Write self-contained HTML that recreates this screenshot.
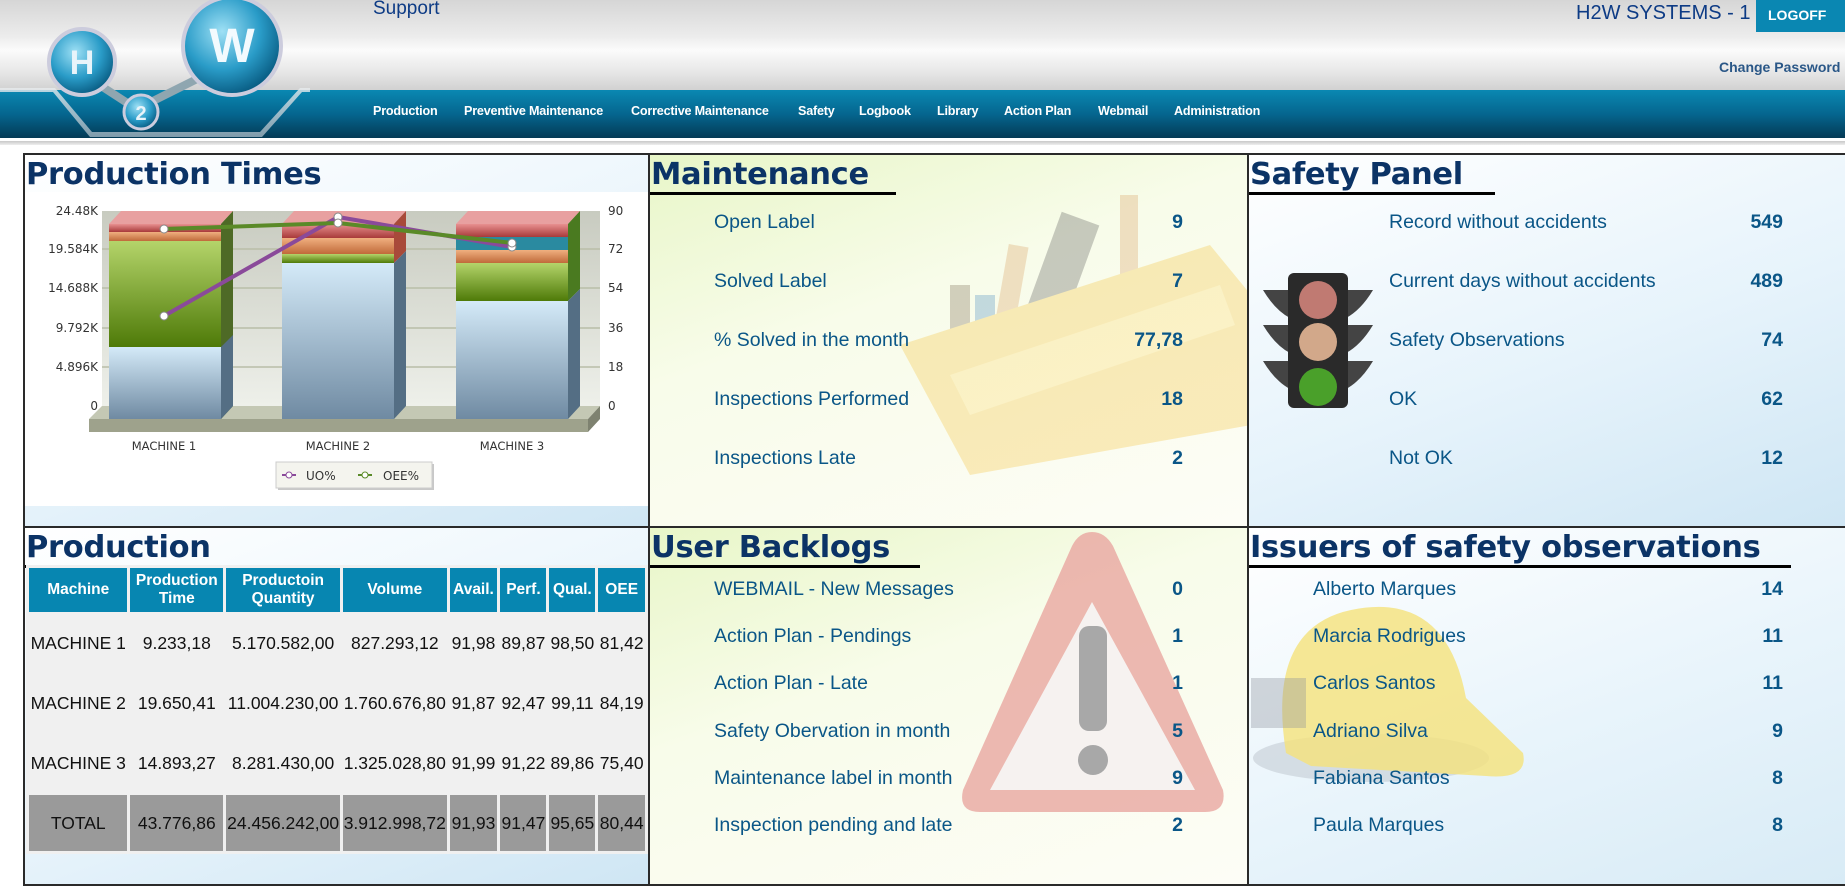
<!DOCTYPE html>
<html><head><meta charset="utf-8">
<style>
*{margin:0;padding:0;box-sizing:border-box}
body{width:1845px;height:881px;overflow:hidden;background:#fff;font-family:"Liberation Sans",Arial,sans-serif;position:relative}
.abs{position:absolute}
#top{left:0;top:0;width:1845px;height:91px;background:linear-gradient(#d6d6d6 0%,#ececec 40%,#fbfbfb 55%,#e6e6e6 80%,#d0d0d0 100%)}
#nav{left:0;top:90px;width:1845px;height:48px;background:linear-gradient(#0a88b2 0%,#05668f 50%,#043a55 100%)}
#nav span{position:absolute;top:14px;color:#fff;font-weight:bold;font-size:12.6px;letter-spacing:-0.2px}
.panel{position:absolute;border:2px solid #2a2a2a;overflow:hidden}
.title{position:absolute;left:0;top:3px;font-family:"DejaVu Sans",Verdana,sans-serif;font-weight:bold;font-size:30.5px;color:#0b3366;letter-spacing:-0.3px;border-bottom:3px solid #000;line-height:34px;white-space:nowrap;padding-left:1px}
.row{position:absolute;font-size:19.5px;color:#0a5687;white-space:nowrap}
.val{position:absolute;font-size:19.5px;color:#0a5687;font-weight:bold;text-align:right;width:120px}
table{border-collapse:separate;border-spacing:3px;background:#f0f0f0}
th{background:#0786b1;color:#fff;font-size:15.5px;font-weight:bold;line-height:18px;padding:0;text-align:center}
td{font-size:17.5px;color:#111;text-align:center;padding:0;white-space:nowrap}
tr.tot td{background:#9a9a9a}
</style></head><body>
<div id="top" class="abs"></div>
<div id="nav" class="abs">
<span style="left:373px">Production</span>
<span style="left:464px">Preventive Maintenance</span>
<span style="left:631px">Corrective Maintenance</span>
<span style="left:798px">Safety</span>
<span style="left:859px">Logbook</span>
<span style="left:937px">Library</span>
<span style="left:1004px">Action Plan</span>
<span style="left:1098px">Webmail</span>
<span style="left:1174px">Administration</span>
</div>
<div class="abs" style="left:0;top:138px;width:1845px;height:3px;background:#fff"></div>
<div class="abs" style="left:0;top:141px;width:1845px;height:4px;background:linear-gradient(#c8c8c8,#eee)"></div>
<!-- logo -->
<svg class="abs" style="left:0;top:0" width="310" height="140" viewBox="0 0 310 140">
<defs>
<radialGradient id="lg" cx="40%" cy="35%" r="65%"><stop offset="0" stop-color="#9ee0f5"/><stop offset="0.6" stop-color="#2a9cc8"/><stop offset="1" stop-color="#0a5f86"/></radialGradient>
<linearGradient id="sw" x1="0" x2="0" y1="0" y2="1"><stop offset="0" stop-color="#e8ecee"/><stop offset="1" stop-color="#9fb4c0"/></linearGradient>
</defs>
<path d="M0 88 L55 88 L92 132 L260 132 L300 88 L310 88 L310 92 L302 92 L262 137 L90 137 L53 92 L0 92Z" fill="url(#sw)" opacity="0.8"/>
<line x1="95" y1="82" x2="135" y2="108" stroke="#8fa6b0" stroke-width="8"/>
<line x1="145" y1="105" x2="205" y2="75" stroke="#8fa6b0" stroke-width="8"/>
<circle cx="82" cy="62" r="33" fill="url(#lg)" stroke="#ccd" stroke-width="4"/>
<circle cx="232" cy="46" r="49" fill="url(#lg)" stroke="#ccd" stroke-width="4"/>
<circle cx="141" cy="112" r="17" fill="url(#lg)" stroke="#ccd" stroke-width="3"/>
<text x="82" y="74" font-family="Liberation Sans" font-weight="bold" font-size="34" fill="#e8f4fa" text-anchor="middle">H</text>
<text x="232" y="62" font-family="Liberation Sans" font-weight="bold" font-size="48" fill="#f2fafe" text-anchor="middle">W</text>
<text x="141" y="120" font-family="Liberation Sans" font-weight="bold" font-size="20" fill="#e8f4fa" text-anchor="middle">2</text>
</svg>
<div class="abs" style="left:373px;top:-2px;font-size:19px;color:#0d3b85">Support</div>
<div class="abs" style="left:1576px;top:2px;font-size:20px;color:#0d3b85">H2W SYSTEMS - 1</div>
<div class="abs" style="left:1756px;top:0;width:89px;height:32px;background:#0a87b2;color:#fff;font-weight:bold;font-size:14px;line-height:30px;padding-left:12px">LOGOFF</div>
<div class="abs" style="left:1719px;top:59px;font-size:14px;font-weight:bold;color:#2a5787;white-space:nowrap">Change Password</div>

<!-- Panel 1 -->
<div class="panel" style="left:23px;top:153px;width:627px;height:375px;background:linear-gradient(160deg,#fff 0%,#eaf5fc 50%,#cfe6f4 100%)">
<div class="title" style="width:327px">Production Times</div>
</div>
<svg class="abs" style="left:25px;top:192px" width="623" height="314" viewBox="25 192 623 314">
<defs>
<linearGradient id="wall" x1="0" x2="0" y1="0" y2="1"><stop offset="0" stop-color="#c8cbc0"/><stop offset="1" stop-color="#eef0ea"/></linearGradient>
<linearGradient id="blu" x1="0" x2="0" y1="0" y2="1"><stop offset="0" stop-color="#d4eaf8"/><stop offset="1" stop-color="#6f8aa2"/></linearGradient>
<linearGradient id="grn" x1="0" x2="0" y1="0" y2="1"><stop offset="0" stop-color="#b4d46a"/><stop offset="1" stop-color="#4e7a08"/></linearGradient>
<linearGradient id="red" x1="0" x2="0" y1="0" y2="1"><stop offset="0" stop-color="#e89090"/><stop offset="1" stop-color="#a83a3a"/></linearGradient>
<linearGradient id="org" x1="0" x2="0" y1="0" y2="1"><stop offset="0" stop-color="#f0b080"/><stop offset="1" stop-color="#c06a3a"/></linearGradient>
</defs>
<rect x="25" y="192" width="623" height="314" fill="#fff"/>
<rect x="102" y="211" width="498" height="195" fill="url(#wall)"/>
<g stroke="#b9bea8" stroke-width="1.5"><line x1="102" y1="249" x2="600" y2="249"/><line x1="102" y1="288" x2="600" y2="288"/><line x1="102" y1="328" x2="600" y2="328"/><line x1="102" y1="367" x2="600" y2="367"/></g>
<polygon points="89,419 102,406 600,406 588,419" fill="#c4c8b4"/>
<rect x="89" y="419" width="499" height="13" fill="#9ea28c"/>
<polygon points="588,419 600,406 600,419 588,432" fill="#7e8270"/>
<g>
<rect x="109" y="347" width="112" height="72" fill="url(#blu)"/>
<rect x="109" y="241" width="112" height="106" fill="url(#grn)"/>
<rect x="109" y="232" width="112" height="9" fill="url(#org)"/>
<rect x="109" y="224" width="112" height="8" fill="url(#red)"/>
<polygon points="109,224 121,211 233,211 221,224" fill="#e8a0a0"/>
<polygon points="221,224 233,211 233,406 221,419" fill="#4e6a26"/>
<polygon points="221,347 233,335 233,406 221,419" fill="#546e84"/>
</g>
<g>
<rect x="282" y="263" width="112" height="156" fill="url(#blu)"/>
<rect x="282" y="254" width="112" height="9" fill="url(#grn)"/>
<rect x="282" y="238" width="112" height="16" fill="url(#org)"/>
<rect x="282" y="224" width="112" height="14" fill="url(#red)"/>
<polygon points="282,224 294,211 406,211 394,224" fill="#e8a0a0"/>
<polygon points="394,224 406,211 406,251 394,263" fill="#a84a3a"/>
<polygon points="394,263 406,251 406,406 394,419" fill="#546e84"/>
</g>
<g>
<rect x="456" y="301" width="112" height="118" fill="url(#blu)"/>
<rect x="456" y="263" width="112" height="38" fill="url(#grn)"/>
<rect x="456" y="250" width="112" height="13" fill="url(#org)"/>
<rect x="456" y="237" width="112" height="13" fill="#2a8aa0"/>
<rect x="456" y="224" width="112" height="13" fill="url(#red)"/>
<polygon points="456,224 468,211 580,211 568,224" fill="#e8a0a0"/>
<polygon points="568,224 580,211 580,289 568,301" fill="#4a7a20"/>
<polygon points="568,301 580,289 580,406 568,419" fill="#546e84"/>
</g>
<polyline points="164,316 338,217 512,247" fill="none" stroke="#8a4a9a" stroke-width="4"/>
<polyline points="164,229 338,223 512,243" fill="none" stroke="#5a8a28" stroke-width="4"/>
<g fill="#fff" stroke="#888" stroke-width="1"><circle cx="164" cy="316" r="4"/><circle cx="338" cy="217" r="4"/><circle cx="512" cy="247" r="4"/><circle cx="164" cy="229" r="4"/><circle cx="338" cy="223" r="4"/><circle cx="512" cy="243" r="4"/></g>
<g font-family="DejaVu Sans" font-size="12" fill="#333">
<text x="98" y="215" text-anchor="end">24.48K</text><text x="98" y="253" text-anchor="end">19.584K</text><text x="98" y="292" text-anchor="end">14.688K</text><text x="98" y="332" text-anchor="end">9.792K</text><text x="98" y="371" text-anchor="end">4.896K</text><text x="98" y="410" text-anchor="end">0</text>
<text x="608" y="215">90</text><text x="608" y="253">72</text><text x="608" y="292">54</text><text x="608" y="332">36</text><text x="608" y="371">18</text><text x="608" y="410">0</text>
<text x="164" y="450" text-anchor="middle" font-size="11.5">MACHINE 1</text><text x="338" y="450" text-anchor="middle" font-size="11.5">MACHINE 2</text><text x="512" y="450" text-anchor="middle" font-size="11.5">MACHINE 3</text>
</g>
<rect x="278" y="464" width="156" height="26" fill="#c8c8c8"/>
<rect x="276" y="462" width="156" height="26" fill="#f4f4ee" stroke="#ccc"/>
<line x1="282" y1="475" x2="296" y2="475" stroke="#8a4a9a" stroke-width="2"/><circle cx="289" cy="475" r="3" fill="#fff" stroke="#8a4a9a"/>
<line x1="358" y1="475" x2="372" y2="475" stroke="#5a8a28" stroke-width="2"/><circle cx="365" cy="475" r="3" fill="#fff" stroke="#5a8a28"/>
<text x="306" y="480" font-family="DejaVu Sans" font-size="12" fill="#333">UO%</text>
<text x="383" y="480" font-family="DejaVu Sans" font-size="12" fill="#333">OEE%</text>
</svg>

<!-- Panel 2 Maintenance -->
<div class="panel" style="left:648px;top:153px;width:601px;height:375px;background:linear-gradient(160deg,#e8f6c8 0%,#f8fcea 40%,#fdfdf6 100%)">
<svg class="abs" style="left:240px;top:20px" width="361" height="340" opacity="0.3">
<rect x="150" y="40" width="40" height="150" fill="#555" transform="rotate(20 170 100)"/>
<rect x="110" y="70" width="20" height="120" fill="#d9a060" transform="rotate(10 120 120)"/>
<rect x="60" y="110" width="20" height="140" fill="#7a6a50"/>
<rect x="85" y="120" width="20" height="130" fill="#4a8ac0"/>
<rect x="230" y="20" width="18" height="160" fill="#d9a060"/>
<polygon points="10,170 320,70 361,120 361,250 80,300" fill="#f5c23a"/>
<polygon points="60,200 330,110 345,150 80,240" fill="#ffd96a"/>
</svg>
<div class="title" style="width:246px">Maintenance</div>
</div>
<!-- Panel 3 Safety -->
<div class="panel" style="left:1247px;top:153px;width:600px;height:375px;background:linear-gradient(160deg,#fff 0%,#e6f3fb 55%,#cfe6f4 100%)">
<div class="title" style="width:246px">Safety Panel</div>
</div>
<svg class="abs" style="left:1260px;top:265px" width="116" height="148" viewBox="1260 265 116 148">
<g fill="#444"><path d="M1263 290 L1290 290 L1290 318 Q1275 310 1263 290Z"/><path d="M1263 325 L1290 325 L1290 353 Q1275 345 1263 325Z"/><path d="M1263 361 L1290 361 L1290 389 Q1275 381 1263 361Z"/>
<path d="M1373 290 L1346 290 L1346 318 Q1361 310 1373 290Z"/><path d="M1373 325 L1346 325 L1346 353 Q1361 345 1373 325Z"/><path d="M1373 361 L1346 361 L1346 389 Q1361 381 1373 361Z"/></g>
<rect x="1288" y="273" width="60" height="135" rx="6" fill="#2a2a2a"/>
<circle cx="1318" cy="300" r="19" fill="#c07a72"/>
<circle cx="1318" cy="342" r="19" fill="#d2a88a"/>
<circle cx="1318" cy="387" r="19" fill="#4aa02a"/>
</svg>
<!-- Panel 4 Production table -->
<div class="panel" style="left:23px;top:526px;width:627px;height:360px;background:linear-gradient(160deg,#fff 0%,#eaf5fc 50%,#cfe6f4 100%)">
<div class="title" style="width:214px">Production</div>
<table class="abs" style="left:1px;top:37px;width:622px">
<colgroup><col style="width:100px"><col style="width:98px"><col style="width:115px"><col style="width:104px"><col style="width:50px"><col style="width:47px"><col style="width:47px"><col style="width:48px"></colgroup>
<tr style="height:44px"><th>Machine</th><th>Production<br>Time</th><th>Productoin<br>Quantity</th><th>Volume</th><th>Avail.</th><th>Perf.</th><th>Qual.</th><th>OEE</th></tr>
<tr style="height:57px"><td>MACHINE 1</td><td>9.233,18</td><td>5.170.582,00</td><td>827.293,12</td><td>91,98</td><td>89,87</td><td>98,50</td><td>81,42</td></tr>
<tr style="height:57px"><td>MACHINE 2</td><td>19.650,41</td><td>11.004.230,00</td><td>1.760.676,80</td><td>91,87</td><td>92,47</td><td>99,11</td><td>84,19</td></tr>
<tr style="height:57px"><td>MACHINE 3</td><td>14.893,27</td><td>8.281.430,00</td><td>1.325.028,80</td><td>91,99</td><td>91,22</td><td>89,86</td><td>75,40</td></tr>
<tr class="tot" style="height:56px"><td>TOTAL</td><td>43.776,86</td><td>24.456.242,00</td><td>3.912.998,72</td><td>91,93</td><td>91,47</td><td>95,65</td><td>80,44</td></tr>
</table>
</div>
<!-- Panel 5 Backlogs -->
<div class="panel" style="left:648px;top:526px;width:601px;height:360px;background:linear-gradient(160deg,#e8f6c8 0%,#f8fcea 40%,#fdfdf6 100%)">
<svg class="abs" style="left:305px;top:-6px" width="275" height="296" viewBox="0 0 275 296">
<path d="M137 10 Q150 10 158 24 L268 268 Q272 290 250 290 L25 290 Q3 290 8 268 L117 24 Q124 10 137 10Z" fill="#e9a6a0" opacity="0.8"/>
<path d="M137 80 L240 268 L35 268Z" fill="#f6f2f0"/>
<rect x="124" y="104" width="28" height="105" rx="10" fill="#a8a8a8"/>
<circle cx="138" cy="238" r="15" fill="#a8a8a8"/>
</svg>
<div class="title" style="width:270px">User Backlogs</div>
</div>
<!-- Panel 6 Issuers -->
<div class="panel" style="left:1247px;top:526px;width:600px;height:360px;background:linear-gradient(160deg,#fff 0%,#e8f4fb 55%,#d8ebf6 100%)">
<svg class="abs" style="left:2px;top:40px" width="290" height="225">
<ellipse cx="120" cy="190" rx="118" ry="24" fill="#bcc4cc" opacity="0.5"/>
<path d="M35 185 Q15 60 100 42 Q195 22 215 130 L272 185 Q278 212 235 208 L60 198Z" fill="#f5e27a" opacity="0.8"/>
<path d="M0 110 L55 110 L55 160 L0 160Z" fill="#8a9098" opacity="0.35"/>
</svg>
<div class="title" style="width:542px">Issuers of safety observations</div>
</div>

<!-- rows maintenance -->
<div class="row" style="left:714px;top:211px">Open Label</div><div class="val" style="left:1063px;top:211px">9</div>
<div class="row" style="left:714px;top:270px">Solved Label</div><div class="val" style="left:1063px;top:270px">7</div>
<div class="row" style="left:714px;top:329px">% Solved in the month</div><div class="val" style="left:1063px;top:329px">77,78</div>
<div class="row" style="left:714px;top:388px">Inspections Performed</div><div class="val" style="left:1063px;top:388px">18</div>
<div class="row" style="left:714px;top:447px">Inspections Late</div><div class="val" style="left:1063px;top:447px">2</div>
<!-- safety -->
<div class="row" style="left:1389px;top:211px">Record without accidents</div><div class="val" style="left:1663px;top:211px">549</div>
<div class="row" style="left:1389px;top:270px">Current days without accidents</div><div class="val" style="left:1663px;top:270px">489</div>
<div class="row" style="left:1389px;top:329px">Safety Observations</div><div class="val" style="left:1663px;top:329px">74</div>
<div class="row" style="left:1389px;top:388px">OK</div><div class="val" style="left:1663px;top:388px">62</div>
<div class="row" style="left:1389px;top:447px">Not OK</div><div class="val" style="left:1663px;top:447px">12</div>
<!-- backlogs -->
<div class="row" style="left:714px;top:578px">WEBMAIL - New Messages</div><div class="val" style="left:1063px;top:578px">0</div>
<div class="row" style="left:714px;top:625px">Action Plan - Pendings</div><div class="val" style="left:1063px;top:625px">1</div>
<div class="row" style="left:714px;top:672px">Action Plan - Late</div><div class="val" style="left:1063px;top:672px">1</div>
<div class="row" style="left:714px;top:720px">Safety Obervation in month</div><div class="val" style="left:1063px;top:720px">5</div>
<div class="row" style="left:714px;top:767px">Maintenance label in month</div><div class="val" style="left:1063px;top:767px">9</div>
<div class="row" style="left:714px;top:814px">Inspection pending and late</div><div class="val" style="left:1063px;top:814px">2</div>
<!-- issuers -->
<div class="row" style="left:1313px;top:578px">Alberto Marques</div><div class="val" style="left:1663px;top:578px">14</div>
<div class="row" style="left:1313px;top:625px">Marcia Rodrigues</div><div class="val" style="left:1663px;top:625px">11</div>
<div class="row" style="left:1313px;top:672px">Carlos Santos</div><div class="val" style="left:1663px;top:672px">11</div>
<div class="row" style="left:1313px;top:720px">Adriano Silva</div><div class="val" style="left:1663px;top:720px">9</div>
<div class="row" style="left:1313px;top:767px">Fabiana Santos</div><div class="val" style="left:1663px;top:767px">8</div>
<div class="row" style="left:1313px;top:814px">Paula Marques</div><div class="val" style="left:1663px;top:814px">8</div>
</body></html>
